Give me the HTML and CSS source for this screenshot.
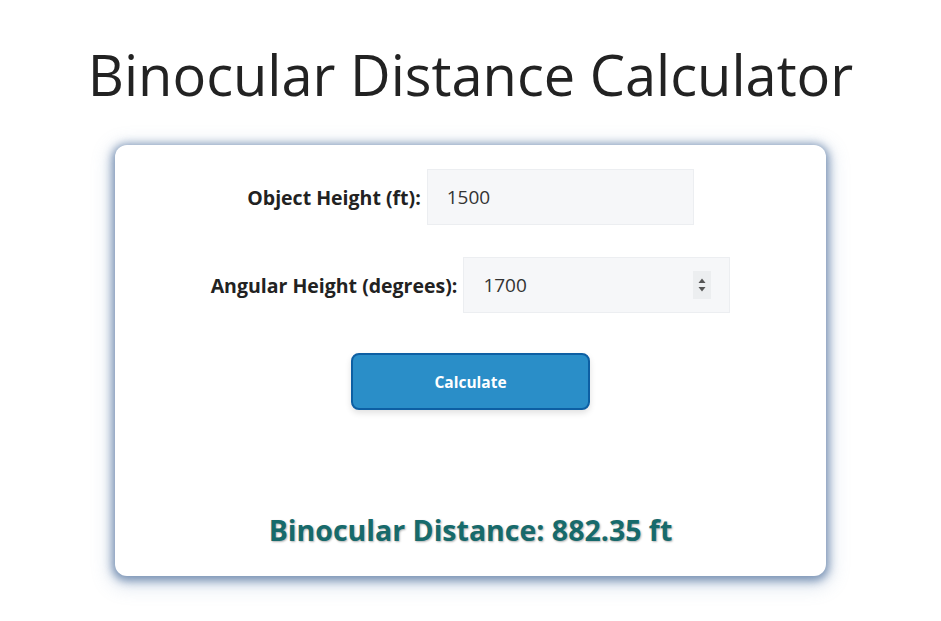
FILE: index.html
```html
<!DOCTYPE html>
<html>
<head>
<meta charset="utf-8">
<link rel="stylesheet" href="styles.css">
</head>
<body>
<h1 class="title">Binocular Distance Calculator</h1>
<div class="card">
  <div class="row">
    <label class="label">Object Height (ft):</label>
    <div class="input">1500</div>
  </div>
  <div class="row">
    <label class="label">Angular Height (degrees):</label>
    <div class="input">1700<span class="spin"><svg width="12" height="26" viewBox="0 0 12 26"><path d="M2.5 11 L6 6.5 L9.5 11 Z" fill="#555"/><path d="M2.5 15 L6 19.5 L9.5 15 Z" fill="#555"/></svg></span></div>
  </div>
  <div class="btnrow"><button class="btn">Calculate</button></div>
  <div class="result">Binocular Distance: 882.35 ft</div>
</div>
</body>
</html>
```
FILE: styles.css
```css
html, body {
  height: 100%;
}
body {
  margin: 0;
  background: #fff;
  font-family: "Open Sans", "Noto Sans", sans-serif;
  color: #222;
  overflow: hidden;
}
.title {
  margin: 34px 0 0;
  text-align: center;
  font-weight: 400;
  font-size: 56px;
  line-height: 80px;
  color: #222;
}
.card {
  width: 711px;
  height: 431px;
  box-sizing: border-box;
  margin: 31px auto 0;
  background: #fff;
  border-radius: 12px;
  box-shadow: 0 2px 8px 3px rgba(70,105,150,0.65), 0 5px 18px 6px rgba(120,150,190,0.25);
  padding: 24px 0 0;
  display: flex;
  flex-direction: column;
  align-items: center;
}
.row {
  display: flex;
  align-items: center;
  gap: 6px;
  margin-bottom: 32px;
}
.label {
  font-weight: 700;
  font-size: 19.5px;
  color: #222;
}
.input {
  width: 267px;
  height: 56px;
  box-sizing: border-box;
  background: #f6f7f9;
  border: 1px solid #eceef1;
  padding: 0 18px 0 19px;
  display: flex;
  align-items: center;
  justify-content: space-between;
  font-size: 19px;
  color: #333;
}
.spin {
  display: flex;
  background: #eceef0;
  width: 18px;
  height: 28px;
  align-items: center;
  justify-content: center;
}
.btnrow {
  margin-top: 8px;
}
.btn {
  width: 239px;
  height: 57px;
  background: #2a8ec8;
  border: 2px solid #0d5fa3;
  border-radius: 8px;
  color: #fff;
  font-family: inherit;
  font-weight: 700;
  font-size: 15.5px;
  box-shadow: 0 3px 6px rgba(0,0,0,0.12);
}
.result {
  margin-top: auto;
  margin-bottom: 27px;
  font-weight: 700;
  font-size: 28.5px;
  color: #176a6b;
  text-shadow: 1px 1px 2px rgba(0,0,0,0.3);
}
```
